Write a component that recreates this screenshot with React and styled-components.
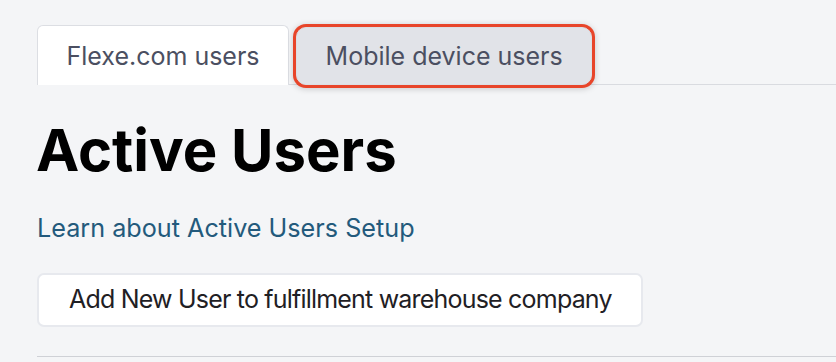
import React from 'react'
import styled, { createGlobalStyle } from 'styled-components'

const GlobalStyle = createGlobalStyle`
  html, body {
    margin: 0;
    padding: 0;
    background: #f4f5f7;
    font-family: Inter, "Noto Sans", sans-serif;
  }
`

const Page = styled.div`
  width: 836px;
  height: 362px;
  overflow: hidden;
  box-sizing: border-box;
  padding: 25px 0 0 37px;
`

const TabBar = styled.div`
  display: flex;
  align-items: flex-end;
  gap: 7px;
  height: 59px;
  border-bottom: 1px solid #d9dbe0;
`

const Tab = styled.button`
  box-sizing: border-box;
  height: ${({ active }) => (active ? '60px' : '58px')};
  margin-bottom: -1px;
  padding: 0 28.5px;
  font-family: Inter, sans-serif;
  font-size: 25px;
  line-height: 30px;
  color: #4b4f61;
  background: ${({ active }) => (active ? '#ffffff' : '#e1e3e8')};
  border: 1px solid #dcdee3;
  border-bottom: ${({ active }) => (active ? 'none' : '1px solid #dcdee3')};
  border-radius: ${({ active }) => (active ? '6px 6px 0 0' : '10px')};
  box-shadow: ${({ focused }) => (focused ? '0 0 0 3px #e8452a, 0 1px 6px 3px rgba(0,0,0,0.18)' : 'none')};
  position: relative;
  z-index: ${({ focused }) => (focused ? 1 : 0)};
  cursor: pointer;
`

const Title = styled.h1`
  margin: 31px 0 0 -1px;
  font-family: Inter, sans-serif;
  font-size: 58px;
  font-weight: 700;
  line-height: 68px;
  color: #000;
`

const HelpLink = styled.a`
  display: block;
  width: fit-content;
  margin-top: 29px;
  font-family: Inter, sans-serif;
  font-size: 25.2px;
  line-height: 30px;
  color: #235a7c;
  text-decoration: none;
`

const Actions = styled.div`
  margin-top: 30px;
  display: flex;
`

const AddButton = styled.button`
  box-sizing: border-box;
  height: 54px;
  padding: 0 29px 2px 30px;
  background: #ffffff;
  border: 2px solid #e7e9ee;
  border-radius: 7px;
  font-family: Inter, sans-serif;
  font-size: 25px;
  letter-spacing: -0.8px;
  color: #1f2024;
  cursor: pointer;
`

const Divider = styled.hr`
  margin: 29px 0 0;
  border: none;
  border-top: 1px solid #cfd1d6;
`

export default function App() {
  return (
    <>
      <GlobalStyle />
      <Page>
        <TabBar>
          <Tab active>Flexe.com users</Tab>
          <Tab focused>Mobile device users</Tab>
        </TabBar>
        <Title>Active Users</Title>
        <HelpLink href="#">Learn about Active Users Setup</HelpLink>
        <Actions>
          <AddButton>Add New User to fulfillment warehouse company</AddButton>
        </Actions>
        <Divider />
      </Page>
    </>
  )
}
